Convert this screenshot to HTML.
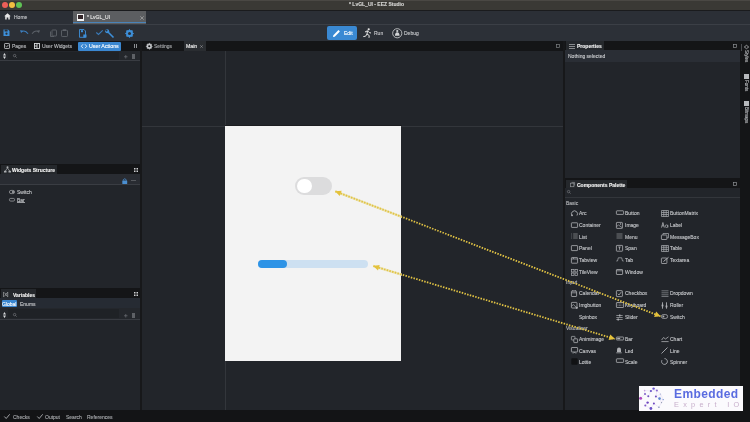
<!DOCTYPE html>
<html><head><meta charset="utf-8">
<style>
*{margin:0;padding:0;box-sizing:border-box}
html,body{width:750px;height:422px;overflow:hidden;background:#22252a;font-family:"Liberation Sans",sans-serif;color:#c6c8cb}
.a{position:absolute}
.t{position:absolute;white-space:nowrap;will-change:transform;-webkit-text-stroke:0.12px currentColor}
svg{position:absolute;overflow:visible}
</style></head><body>
<div class="a" style="left:0px;top:0px;width:750px;height:10px;background:#3a3935;"></div>
<div class="a" style="left:0px;top:0px;width:750px;height:1px;background:#4a4844;"></div>
<div class="a" style="left:0px;top:10px;width:750px;height:0.5px;background:#1a1b1d;"></div>
<div class="a" style="left:1.5px;top:2px;width:6px;height:6px;border-radius:50%;background:#ec5f58"></div>
<div class="a" style="left:8.5px;top:2px;width:6px;height:6px;border-radius:50%;background:#f3be41"></div>
<div class="a" style="left:15.5px;top:2px;width:6px;height:6px;border-radius:50%;background:#5fc355"></div>
<div class="t" style="left:348.5px;top:1.3px;font-size:5px;line-height:6.0px;color:#d6d6d4;font-weight:700;">* LvGL_UI - EEZ Studio</div>
<div class="a" style="left:0px;top:10.5px;width:750px;height:13.5px;background:#2b2f36;"></div>
<svg style="left:4px;top:13px;" width="7" height="7" viewBox="0 0 7 7"><path d="M3.5 0.3 L6.8 3.3 H5.8 V6.6 H4.3 V4.6 H2.7 V6.6 H1.2 V3.3 H0.2 Z" fill="#e6e6e6"/></svg>
<div class="t" style="left:14px;top:14.3px;font-size:5px;line-height:6.0px;color:#c4c6c9;font-weight:400;">Home</div>
<div class="a" style="left:73px;top:11px;width:73px;height:13px;background:#5c5e61;"></div>
<div class="a" style="left:73px;top:22.2px;width:73px;height:1.2px;background:#4a83b8;"></div>
<div class="a" style="left:77px;top:14px;width:7px;height:6.5px;background:#f3f3f3;"></div>
<div class="a" style="left:78.3px;top:15.2px;width:4.6px;height:4.2px;background:#33262a;"></div>
<div class="t" style="left:87px;top:14.3px;font-size:5px;line-height:6.0px;color:#e9e9e9;font-weight:400;">* LvGL_UI</div>
<svg style="left:140px;top:15.5px;" width="4" height="4" viewBox="0 0 4 4"><path d="M0.3 0.3 L3.7 3.7 M3.7 0.3 L0.3 3.7" stroke="#a9aaab" stroke-width="0.7"/></svg>
<div class="a" style="left:0px;top:24px;width:750px;height:16.5px;background:#2c3037;"></div>
<div class="a" style="left:0px;top:24px;width:750px;height:0.6px;background:#3b3f46;"></div>
<svg style="left:2.5px;top:29px;" width="7" height="7.5" viewBox="0 0 7 7.5"><path d="M0.5 0.5 H5 L6.5 2 V7 H0.5 Z" fill="#3d8fd9"/><rect x="1.6" y="0.5" width="3" height="2" fill="#2c3037"/><circle cx="3.5" cy="4.7" r="1.1" fill="#2c3037"/></svg>
<svg style="left:19.5px;top:30px;" width="9" height="5" viewBox="0 0 9 5"><path d="M1.5 1.8 Q5 -0.5 8 3.8" stroke="#3d7fbf" stroke-width="1.1" fill="none"/><path d="M0 0.3 L2.8 0.6 L1.2 3.2 Z" fill="#3d7fbf"/></svg>
<svg style="left:30.5px;top:30px;" width="9" height="5" viewBox="0 0 9 5"><path d="M7.5 1.8 Q4 -0.5 1 3.8" stroke="#5b6068" stroke-width="1.1" fill="none"/><path d="M9 0.3 L6.2 0.6 L7.8 3.2 Z" fill="#5b6068"/></svg>
<svg style="left:49.5px;top:29px;" width="7" height="8" viewBox="0 0 7 8"><rect x="2" y="1" width="4.5" height="6" rx="0.5" stroke="#5e6269" stroke-width="0.9" fill="none"/><path d="M0.5 2.5 V7.5 H4" stroke="#5e6269" stroke-width="0.9" fill="none"/></svg>
<svg style="left:60.5px;top:29px;" width="7" height="8" viewBox="0 0 7 8"><rect x="0.5" y="1.3" width="6" height="6.2" rx="0.7" stroke="#5e6269" stroke-width="0.9" fill="none"/><rect x="2" y="0.4" width="3" height="1.6" fill="#5e6269"/></svg>
<svg style="left:78.5px;top:28.5px;" width="8" height="9" viewBox="0 0 8 9"><path d="M0.5 0.5 H5 L6.5 2 V8.3 H0.5 Z" stroke="#3d8fd9" stroke-width="0.9" fill="none"/><rect x="4.3" y="5.5" width="3.2" height="3" fill="#3d8fd9"/><rect x="2" y="1.2" width="2" height="2" fill="#3d8fd9"/></svg>
<svg style="left:96px;top:30px;" width="7" height="5" viewBox="0 0 7 5"><path d="M0.3 2.5 L2.5 4.5 L6.7 0.3" stroke="#3a7ab8" stroke-width="1.1" fill="none"/></svg>
<svg style="left:105px;top:28.5px;" width="10" height="9" viewBox="0 0 10 9"><path d="M1.5 1.5 L8.5 8.5" stroke="#3d8fd9" stroke-width="1.6"/><circle cx="2.2" cy="2.2" r="2" fill="#3d8fd9"/><circle cx="1.6" cy="1.6" r="0.9" fill="#2c3037"/></svg>
<svg style="left:125px;top:28.5px;" width="9" height="9" viewBox="0 0 9 9"><path d="M8.50 4.50 L7.38 5.69 L7.33 7.33 L5.69 7.38 L4.50 8.50 L3.31 7.38 L1.67 7.33 L1.62 5.69 L0.50 4.50 L1.62 3.31 L1.67 1.67 L3.31 1.62 L4.50 0.50 L5.69 1.62 L7.33 1.67 L7.38 3.31Z" fill="#3d8fd9" stroke="#3d8fd9" stroke-width="0.8" stroke-linejoin="round"/><circle cx="4.5" cy="4.5" r="1.52" fill="#2c3037"/></svg>
<div class="a" style="left:326.5px;top:26px;width:30.5px;height:13.8px;background:#3a89d3;border-radius:2px"></div>
<svg style="left:331.5px;top:28.5px;" width="9" height="9" viewBox="0 0 9 9"><path d="M1 8 L1.3 6.3 L6.5 1.1 L7.9 2.5 L2.7 7.7 Z" fill="#fff"/></svg>
<div class="t" style="left:344.3px;top:30.2px;font-size:5px;line-height:6.0px;color:#ffffff;font-weight:400;">Edit</div>
<svg style="left:362.5px;top:27.5px;" width="9" height="10" viewBox="0 0 9 10"><circle cx="5.7" cy="1.3" r="1.1" fill="#e6e6e6"/><path d="M2 4 L4.5 2.8 L6.3 4.6 L8 5 M4.5 2.8 L4 6 L6.2 7.5 L6 9.8 M4 6 L2.6 8.2 L0.3 8.6" stroke="#e6e6e6" stroke-width="1" fill="none" stroke-linejoin="round"/></svg>
<div class="t" style="left:374px;top:30.2px;font-size:5px;line-height:6.0px;color:#c4c6c9;font-weight:400;">Run</div>
<svg style="left:391.5px;top:27.8px;" width="10.5" height="10.5" viewBox="0 0 10.5 10.5"><circle cx="5.25" cy="5.25" r="4.6" stroke="#d2d4d6" stroke-width="0.8" fill="none"/><circle cx="5.25" cy="3" r="1.1" fill="#d2d4d6"/><path d="M3 7.8 Q3 4.3 5.25 4.3 Q7.5 4.3 7.5 7.8 Z" fill="#d2d4d6"/></svg>
<div class="t" style="left:404px;top:30.2px;font-size:5px;line-height:6.0px;color:#c4c6c9;font-weight:400;">Debug</div>
<div class="a" style="left:0px;top:40.5px;width:140px;height:10.5px;background:#141517;"></div>
<svg style="left:4px;top:43px;" width="6" height="6" viewBox="0 0 6 6"><rect x="0.5" y="0.5" width="5" height="5" rx="0.6" stroke="#b5b7ba" stroke-width="0.9" fill="none"/><path d="M1.5 3 L2.6 4 L4.5 1.8" stroke="#b5b7ba" stroke-width="0.8" fill="none"/></svg>
<div class="t" style="left:12px;top:43.2px;font-size:5px;line-height:6.0px;color:#b9bbbe;font-weight:400;">Pages</div>
<svg style="left:34px;top:43px;" width="6" height="6" viewBox="0 0 6 6"><rect x="0.5" y="0.5" width="5" height="5" stroke="#dadcdf" stroke-width="0.9" fill="none"/><path d="M3 0.5 V5.5 M0.5 3 H3" stroke="#dadcdf" stroke-width="0.9"/></svg>
<div class="t" style="left:41.5px;top:43.2px;font-size:5px;line-height:6.0px;color:#b9bbbe;font-weight:400;">User Widgets</div>
<div class="a" style="left:78px;top:42.2px;width:43.2px;height:8.6px;background:#3a87d1;border-radius:1px"></div>
<svg style="left:81px;top:44.2px;" width="6" height="4.5" viewBox="0 0 6 4.5"><path d="M2 0.3 L0.3 2.25 L2 4.2 M4 0.3 L5.7 2.25 L4 4.2" stroke="#fff" stroke-width="0.8" fill="none"/></svg>
<div class="t" style="left:88.8px;top:43.1px;font-size:5.3px;line-height:6.359999999999999px;color:#ffffff;font-weight:400;">User Actions</div>
<div class="a" style="left:134px;top:44.2px;width:0.8px;height:4px;background:#8d9094;"></div>
<div class="a" style="left:136px;top:44.2px;width:0.8px;height:4px;background:#8d9094;"></div>
<div class="a" style="left:0px;top:51px;width:140px;height:9.5px;background:#24272c;"></div>
<div class="a" style="left:0px;top:60px;width:140px;height:0.8px;background:#393c42;"></div>
<div class="a" style="left:8px;top:51.5px;width:111px;height:8.5px;background:#1f2226;"></div>
<svg style="left:3px;top:53px;" width="3" height="6" viewBox="0 0 3 6"><path d="M1.5 0 L3 2.5 H0 Z M1.5 6 L3 3.5 H0 Z" fill="#d8dadc"/></svg>
<svg style="left:13px;top:53.5px;" width="4" height="4" viewBox="0 0 4 4"><circle cx="1.6" cy="1.6" r="1.2" stroke="#7f8287" stroke-width="0.6" fill="none"/><path d="M2.5 2.5 L3.7 3.7" stroke="#7f8287" stroke-width="0.6"/></svg>
<svg style="left:123.5px;top:54.8px;" width="3.5" height="3.5" viewBox="0 0 3.5 3.5"><path d="M1.75 0 V3.5 M0 1.75 H3.5" stroke="#6c7075" stroke-width="0.7"/></svg>
<div class="a" style="left:131.5px;top:54px;width:3px;height:4.5px;background:#5e6166;"></div>
<div class="a" style="left:140px;top:40.5px;width:2px;height:370px;background:#17181a;"></div>
<div class="a" style="left:0px;top:163.6px;width:140px;height:10px;background:#141517;"></div>
<div class="a" style="left:0.5px;top:164.8px;width:56.5px;height:8.8px;background:#25282c;"></div>
<svg style="left:4px;top:165.8px;" width="7" height="6.5" viewBox="0 0 7 6.5"><circle cx="3.5" cy="1.2" r="1" fill="#aeb0b3"/><path d="M3.5 2 L1.3 5 M3.5 2 L5.7 5" stroke="#aeb0b3" stroke-width="0.7"/><rect x="0" y="4.8" width="2.5" height="1.7" fill="#aeb0b3"/><rect x="4.5" y="4.8" width="2.5" height="1.7" fill="#aeb0b3"/></svg>
<div class="t" style="left:12.3px;top:167.2px;font-size:5px;line-height:6.0px;color:#f0f0f0;font-weight:700;">Widgets Structure</div>
<svg style="left:133.6px;top:167.8px;" width="4" height="4" viewBox="0 0 4 4"><rect x="0" y="0" width="1.5" height="1.5" fill="#cfd1d4"/><rect x="2.5" y="0" width="1.5" height="1.5" fill="#cfd1d4"/><rect x="0" y="2.5" width="1.5" height="1.5" fill="#cfd1d4"/><rect x="2.5" y="2.5" width="1.5" height="1.5" fill="#cfd1d4"/></svg>
<div class="a" style="left:0px;top:173.6px;width:140px;height:11px;background:#292c32;"></div>
<div class="a" style="left:0px;top:184.3px;width:140px;height:0.8px;background:#3a3d43;"></div>
<svg style="left:121.8px;top:177.5px;" width="5.5" height="6" viewBox="0 0 5.5 6"><path d="M1.2 2.5 V1.8 Q2.75 -0.3 4.3 1.8 V2.5" stroke="#4b8fd1" stroke-width="0.8" fill="none"/><rect x="0.3" y="2.5" width="4.9" height="3.5" rx="0.5" fill="#4b8fd1"/></svg>
<div class="a" style="left:131px;top:180.4px;width:5px;height:0.7px;background:#55585d;"></div>
<svg style="left:9px;top:189.5px;" width="6" height="4" viewBox="0 0 6 4"><rect x="0.4" y="0.4" width="5.2" height="3.2" rx="1.6" stroke="#a9abae" stroke-width="0.7" fill="none"/><circle cx="4" cy="2" r="1.1" fill="#a9abae"/></svg>
<div class="t" style="left:17px;top:188.5px;font-size:5px;line-height:6.0px;color:#c4c6c9;font-weight:400;">Switch</div>
<svg style="left:9px;top:197.8px;" width="6" height="3.5" viewBox="0 0 6 3.5"><rect x="0.4" y="0.4" width="5.2" height="2.7" rx="1.3" stroke="#a9abae" stroke-width="0.7" fill="none"/></svg>
<div class="t" style="left:17px;top:196.5px;font-size:5px;line-height:6.0px;color:#c4c6c9;font-weight:400;">Bar</div>
<div class="a" style="left:17px;top:201.8px;width:7.8px;height:0.5px;background:#9a9ca0;"></div>
<div class="a" style="left:0px;top:288px;width:140px;height:9.6px;background:#141517;"></div>
<div class="a" style="left:1px;top:288.5px;width:35px;height:9.1px;background:#25282c;"></div>
<div class="t" style="left:3px;top:291.3px;font-size:5px;line-height:6.0px;color:#b2b4b7;font-weight:400;">[x]</div>
<div class="t" style="left:12.5px;top:291.5px;font-size:5px;line-height:6.0px;color:#f0f0f0;font-weight:700;">Variables</div>
<svg style="left:133.7px;top:291.5px;" width="4" height="4" viewBox="0 0 4 4"><rect x="0" y="0" width="1.5" height="1.5" fill="#cfd1d4"/><rect x="2.5" y="0" width="1.5" height="1.5" fill="#cfd1d4"/><rect x="0" y="2.5" width="1.5" height="1.5" fill="#cfd1d4"/><rect x="2.5" y="2.5" width="1.5" height="1.5" fill="#cfd1d4"/></svg>
<div class="a" style="left:0px;top:297.6px;width:140px;height:10.6px;background:#262b33;"></div>
<div class="a" style="left:1.5px;top:299.8px;width:15.5px;height:7.6px;background:#3a87d1;border-radius:1px"></div>
<div class="t" style="left:2px;top:301.2px;font-size:5px;line-height:6.0px;color:#ffffff;font-weight:400;">Global</div>
<div class="t" style="left:19.5px;top:301.2px;font-size:5px;line-height:6.0px;color:#c4c6c9;font-weight:400;">Enums</div>
<div class="a" style="left:0px;top:308.2px;width:140px;height:10.8px;background:#24272c;"></div>
<div class="a" style="left:0px;top:318.5px;width:140px;height:0.8px;background:#393c42;"></div>
<div class="a" style="left:8px;top:309px;width:111px;height:9.3px;background:#1f2226;"></div>
<svg style="left:3px;top:312px;" width="3" height="6" viewBox="0 0 3 6"><path d="M1.5 0 L3 2.5 H0 Z M1.5 6 L3 3.5 H0 Z" fill="#d8dadc"/></svg>
<svg style="left:13px;top:313px;" width="4" height="4" viewBox="0 0 4 4"><circle cx="1.6" cy="1.6" r="1.2" stroke="#7f8287" stroke-width="0.6" fill="none"/><path d="M2.5 2.5 L3.7 3.7" stroke="#7f8287" stroke-width="0.6"/></svg>
<svg style="left:123.5px;top:313.5px;" width="3.5" height="3.5" viewBox="0 0 3.5 3.5"><path d="M1.75 0 V3.5 M0 1.75 H3.5" stroke="#6c7075" stroke-width="0.7"/></svg>
<div class="a" style="left:131.5px;top:313px;width:3px;height:4.5px;background:#5e6166;"></div>
<div class="a" style="left:142px;top:40.5px;width:421px;height:10.5px;background:#141517;"></div>
<svg style="left:145.6px;top:42.8px;" width="6.5" height="6.5" viewBox="0 0 6.5 6.5"><path d="M6.15 3.25 L5.34 4.12 L5.30 5.30 L4.12 5.34 L3.25 6.15 L2.38 5.34 L1.20 5.30 L1.16 4.12 L0.35 3.25 L1.16 2.38 L1.20 1.20 L2.38 1.16 L3.25 0.35 L4.12 1.16 L5.30 1.20 L5.34 2.38Z" fill="#c9cbce" stroke="#c9cbce" stroke-width="0.8" stroke-linejoin="round"/><circle cx="3.25" cy="3.25" r="1.10" fill="#141517"/></svg>
<div class="t" style="left:154px;top:43.2px;font-size:5px;line-height:6.0px;color:#a6a8ab;font-weight:400;">Settings</div>
<div class="a" style="left:184px;top:41.2px;width:22px;height:9.8px;background:#2a2d31;"></div>
<div class="t" style="left:186.3px;top:43.2px;font-size:5.2px;line-height:6.24px;color:#f2f2f2;font-weight:400;">Main</div>
<svg style="left:199.5px;top:45px;" width="3" height="3" viewBox="0 0 3 3"><path d="M0.3 0.3 L2.7 2.7 M2.7 0.3 L0.3 2.7" stroke="#9a9c9f" stroke-width="0.6"/></svg>
<div class="a" style="left:225px;top:51px;width:1px;height:359px;background:#33363b;"></div>
<svg style="left:555.8px;top:44.3px;" width="4" height="4" viewBox="0 0 4 4"><rect x="0.4" y="0.4" width="3.2" height="3.2" stroke="#7d8084" stroke-width="0.7" fill="none"/></svg>
<div class="a" style="left:142px;top:125.8px;width:421px;height:1px;background:#33363b;"></div>
<div class="a" style="left:225px;top:124.6px;width:176.5px;height:1.2px;background:#1c1d20;"></div>
<div class="a" style="left:224.8px;top:125.8px;width:176.7px;height:235px;background:#f3f3f3;"></div>
<div class="a" style="left:295.4px;top:176.8px;width:36.4px;height:18px;background:#dcdcdd;border-radius:9px"></div>
<div class="a" style="left:297.3px;top:178.5px;width:14.6px;height:14.6px;border-radius:50%;background:#fff"></div>
<div class="a" style="left:258px;top:259.8px;width:110.3px;height:7.8px;background:#cde0f1;border-radius:3.9px"></div>
<div class="a" style="left:258px;top:259.8px;width:28.5px;height:7.8px;background:#2d93e6;border-radius:3.9px"></div>
<div class="a" style="left:563px;top:40.5px;width:2px;height:370px;background:#17181a;"></div>
<div class="a" style="left:565px;top:40.5px;width:175px;height:9.5px;background:#141517;"></div>
<div class="a" style="left:565.5px;top:41.2px;width:38px;height:8.8px;background:#25282c;"></div>
<svg style="left:569px;top:43.5px;" width="6" height="5" viewBox="0 0 6 5"><path d="M0 0.5 H6 M0 2.5 H6 M0 4.5 H6" stroke="#b4b6b9" stroke-width="0.7"/></svg>
<div class="t" style="left:576.8px;top:43.2px;font-size:5px;line-height:6.0px;color:#f0f0f0;font-weight:700;">Properties</div>
<svg style="left:733px;top:44px;" width="4" height="4" viewBox="0 0 4 4"><rect x="0.4" y="0.4" width="3.2" height="3.2" stroke="#8d9094" stroke-width="0.7" fill="none"/></svg>
<div class="a" style="left:565px;top:50px;width:175px;height:12px;background:#2a2e35;"></div>
<div class="t" style="left:568px;top:53.4px;font-size:5px;line-height:6.0px;color:#c9cbce;font-weight:400;">Nothing selected</div>
<div class="a" style="left:740px;top:40.5px;width:10px;height:370px;background:#141517;"></div>
<div class="a" style="left:740.5px;top:44px;width:1.5px;height:7px;background:#4a4c50;"></div>
<div class="a" style="left:565px;top:177.6px;width:175px;height:10px;background:#141517;"></div>
<div class="a" style="left:566px;top:180px;width:61px;height:7.6px;background:#25282c;"></div>
<svg style="left:569.5px;top:181.5px;" width="5" height="5" viewBox="0 0 5 5"><rect x="0.4" y="1.2" width="3.5" height="3.5" stroke="#8f9296" stroke-width="0.7" fill="none"/><path d="M1.5 0.4 H4.6 V3.5" stroke="#8f9296" stroke-width="0.7" fill="none"/></svg>
<div class="t" style="left:577px;top:181.6px;font-size:5px;line-height:6.0px;color:#f0f0f0;font-weight:700;">Components Palette</div>
<svg style="left:733px;top:182px;" width="4" height="4" viewBox="0 0 4 4"><rect x="0.4" y="0.4" width="3.2" height="3.2" stroke="#8d9094" stroke-width="0.7" fill="none"/></svg>
<div class="a" style="left:565px;top:187.6px;width:175px;height:9.6px;background:#22252a;"></div>
<div class="a" style="left:565px;top:197px;width:175px;height:0.8px;background:#33363b;"></div>
<svg style="left:567px;top:190.3px;" width="4" height="4" viewBox="0 0 4 4"><circle cx="1.6" cy="1.6" r="1.2" stroke="#7f8287" stroke-width="0.6" fill="none"/><path d="M2.5 2.5 L3.7 3.7" stroke="#7f8287" stroke-width="0.6"/></svg>
<div class="t" style="left:566px;top:199.5px;font-size:5px;line-height:6.0px;color:#b6b8bb;font-weight:400;">Basic</div>
<div class="a" style="left:0px;top:410.4px;width:750px;height:11.6px;background:#131416;"></div>
<svg style="left:4px;top:414px;" width="6" height="5" viewBox="0 0 6 5"><path d="M0.3 2.5 L2.2 4.5 L5.7 0.3" stroke="#c0c2c5" stroke-width="0.8" fill="none"/></svg>
<div class="t" style="left:13px;top:413.7px;font-size:5px;line-height:6.0px;color:#a6a8ab;font-weight:400;">Checks</div>
<svg style="left:37px;top:414px;" width="6" height="5" viewBox="0 0 6 5"><path d="M0.3 2.5 L2.2 4.5 L5.7 0.3" stroke="#c0c2c5" stroke-width="0.8" fill="none"/></svg>
<div class="t" style="left:45px;top:413.7px;font-size:5px;line-height:6.0px;color:#a6a8ab;font-weight:400;">Output</div>
<div class="t" style="left:66px;top:413.7px;font-size:5px;line-height:6.0px;color:#a6a8ab;font-weight:400;">Search</div>
<div class="t" style="left:87px;top:413.7px;font-size:5px;line-height:6.0px;color:#a6a8ab;font-weight:400;">References</div>
<svg style="left:570.5px;top:209.89999999999998px;" width="7" height="6" viewBox="0 0 7 6"><path d="M1 5.5 A3 3 0 1 1 6 5.5" stroke="#aeb0b4" stroke-width="0.9" fill="none"/><circle cx="1" cy="5.3" r="0.9" fill="#aeb0b4"/></svg>
<div class="t" style="left:579px;top:210.2px;font-size:5px;line-height:6.0px;color:#c3c5c8;font-weight:400;">Arc</div>
<svg style="left:616px;top:209.89999999999998px;" width="8" height="5" viewBox="0 0 8 5"><rect x="0.4" y="0.8" width="7.2" height="3.6" rx="0.6" stroke="#aeb0b4" stroke-width="0.8" fill="none"/></svg>
<div class="t" style="left:625px;top:210.2px;font-size:5px;line-height:6.0px;color:#c3c5c8;font-weight:400;">Button</div>
<svg style="left:661px;top:209.89999999999998px;" width="8" height="7" viewBox="0 0 8 7"><path d="M0.5 0.5 H7.5 V6.5 H0.5 Z M0.5 2.5 H7.5 M0.5 4.5 H7.5 M2.8 0.5 V6.5 M5.2 0.5 V6.5" stroke="#aeb0b4" stroke-width="0.7" fill="none"/></svg>
<div class="t" style="left:670px;top:210.2px;font-size:5px;line-height:6.0px;color:#c3c5c8;font-weight:400;">ButtonMatrix</div>
<svg style="left:570.5px;top:221.7px;" width="7" height="6" viewBox="0 0 7 6"><rect x="0.4" y="0.8" width="6.2" height="4.6" rx="0.5" stroke="#aeb0b4" stroke-width="0.8" fill="none"/></svg>
<div class="t" style="left:579px;top:222px;font-size:5px;line-height:6.0px;color:#c3c5c8;font-weight:400;">Container</div>
<svg style="left:616px;top:221.7px;" width="7" height="7" viewBox="0 0 7 7"><rect x="0.4" y="0.4" width="6" height="6" rx="0.6" stroke="#aeb0b4" stroke-width="0.8" fill="none"/><path d="M0.6 4.5 L2.5 3 L6.3 5.8" stroke="#aeb0b4" stroke-width="0.7" fill="none"/><circle cx="4.5" cy="2" r="0.7" fill="#aeb0b4"/></svg>
<div class="t" style="left:625px;top:222px;font-size:5px;line-height:6.0px;color:#c3c5c8;font-weight:400;">Image</div>
<svg style="left:661px;top:221.7px;" width="8" height="6" viewBox="0 0 8 6"><path d="M0.5 5.6 L1.9 0.5 L3.3 5.6 M1 3.8 H2.8" stroke="#aeb0b4" stroke-width="0.8" fill="none"/><circle cx="5.5" cy="4.2" r="1.3" stroke="#aeb0b4" stroke-width="0.7" fill="none"/><path d="M6.8 2.8 V5.6" stroke="#aeb0b4" stroke-width="0.7"/></svg>
<div class="t" style="left:670px;top:222px;font-size:5px;line-height:6.0px;color:#c3c5c8;font-weight:400;">Label</div>
<svg style="left:570.5px;top:233.29999999999998px;" width="7" height="6" viewBox="0 0 7 6"><path d="M0.3 1 H1.1 M2.2 1 H6.7 M0.3 3 H1.1 M2.2 3 H6.7 M0.3 5 H1.1 M2.2 5 H6.7" stroke="#aeb0b4" stroke-width="0.6"/></svg>
<div class="t" style="left:579px;top:233.6px;font-size:5px;line-height:6.0px;color:#c3c5c8;font-weight:400;">List</div>
<svg style="left:616px;top:233.29999999999998px;" width="7" height="6" viewBox="0 0 7 6"><path d="M0.5 1 H6.5 M0.5 3 H6.5 M0.5 5 H6.5" stroke="#aeb0b4" stroke-width="0.6"/></svg>
<div class="t" style="left:625px;top:233.6px;font-size:5px;line-height:6.0px;color:#c3c5c8;font-weight:400;">Menu</div>
<svg style="left:661px;top:233.29999999999998px;" width="8" height="7" viewBox="0 0 8 7"><rect x="0.4" y="2" width="5.5" height="4.5" rx="0.5" stroke="#aeb0b4" stroke-width="0.8" fill="none"/><path d="M2 2 V0.5 H7.5 V4.8 H5.9" stroke="#aeb0b4" stroke-width="0.7" fill="none"/></svg>
<div class="t" style="left:670px;top:233.6px;font-size:5px;line-height:6.0px;color:#c3c5c8;font-weight:400;">MessageBox</div>
<svg style="left:570.5px;top:245.0px;" width="7" height="6" viewBox="0 0 7 6"><rect x="0.4" y="0.6" width="6.2" height="5" rx="0.5" stroke="#aeb0b4" stroke-width="0.8" fill="none"/></svg>
<div class="t" style="left:579px;top:245.3px;font-size:5px;line-height:6.0px;color:#c3c5c8;font-weight:400;">Panel</div>
<svg style="left:616px;top:245.0px;" width="7" height="7" viewBox="0 0 7 7"><rect x="0.4" y="0.4" width="6.2" height="5.8" rx="0.5" stroke="#aeb0b4" stroke-width="0.8" fill="none"/><path d="M2.3 2 H4.7 M3.5 2 V4.8" stroke="#aeb0b4" stroke-width="0.8"/></svg>
<div class="t" style="left:625px;top:245.3px;font-size:5px;line-height:6.0px;color:#c3c5c8;font-weight:400;">Span</div>
<svg style="left:661px;top:245.0px;" width="8" height="7" viewBox="0 0 8 7"><path d="M0.5 0.5 H7.5 V6.5 H0.5 Z M0.5 2.3 H7.5 M0.5 4.4 H7.5 M2.8 0.5 V6.5 M5.2 0.5 V6.5" stroke="#aeb0b4" stroke-width="0.7" fill="none"/></svg>
<div class="t" style="left:670px;top:245.3px;font-size:5px;line-height:6.0px;color:#c3c5c8;font-weight:400;">Table</div>
<svg style="left:570.5px;top:256.7px;" width="7" height="7" viewBox="0 0 7 7"><rect x="0.4" y="0.6" width="6.2" height="5.6" rx="0.5" stroke="#aeb0b4" stroke-width="0.8" fill="none"/><path d="M0.4 2 H6.6 M2.5 0.6 V2" stroke="#aeb0b4" stroke-width="0.7"/></svg>
<div class="t" style="left:579px;top:257px;font-size:5px;line-height:6.0px;color:#c3c5c8;font-weight:400;">Tabview</div>
<svg style="left:616px;top:256.7px;" width="8" height="5" viewBox="0 0 8 5"><path d="M0.3 4 H1.5 L2.3 0.8 H5.7 L6.5 4 H7.7" stroke="#aeb0b4" stroke-width="0.7" fill="none"/></svg>
<div class="t" style="left:625px;top:257px;font-size:5px;line-height:6.0px;color:#c3c5c8;font-weight:400;">Tab</div>
<svg style="left:661px;top:256.7px;" width="8" height="7" viewBox="0 0 8 7"><rect x="0.4" y="1" width="5.5" height="5.5" rx="0.6" stroke="#aeb0b4" stroke-width="0.8" fill="none"/><path d="M2.5 4.5 L7.5 0.3" stroke="#aeb0b4" stroke-width="1"/></svg>
<div class="t" style="left:670px;top:257px;font-size:5px;line-height:6.0px;color:#c3c5c8;font-weight:400;">Textarea</div>
<svg style="left:570.5px;top:268.5px;" width="7" height="7" viewBox="0 0 7 7"><rect x="0.4" y="0.4" width="2.6" height="2.6" stroke="#aeb0b4" stroke-width="0.7" fill="none"/><rect x="4" y="0.4" width="2.6" height="2.6" stroke="#aeb0b4" stroke-width="0.7" fill="none"/><rect x="0.4" y="4" width="2.6" height="2.6" stroke="#aeb0b4" stroke-width="0.7" fill="none"/><rect x="4" y="4" width="2.6" height="2.6" stroke="#aeb0b4" stroke-width="0.7" fill="none"/></svg>
<div class="t" style="left:579px;top:268.8px;font-size:5px;line-height:6.0px;color:#c3c5c8;font-weight:400;">TileView</div>
<svg style="left:616px;top:268.5px;" width="7" height="6" viewBox="0 0 7 6"><rect x="0.4" y="0.5" width="6.2" height="5" rx="0.5" stroke="#aeb0b4" stroke-width="0.8" fill="none"/><path d="M0.4 1.8 H6.6" stroke="#aeb0b4" stroke-width="0.7"/></svg>
<div class="t" style="left:625px;top:268.8px;font-size:5px;line-height:6.0px;color:#c3c5c8;font-weight:400;">Window</div>
<div class="t" style="left:566px;top:278.6px;font-size:5px;line-height:6.0px;color:#b6b8bb;font-weight:400;">Input</div>
<svg style="left:570.5px;top:290.09999999999997px;" width="6" height="7" viewBox="0 0 6 7"><rect x="0.4" y="1" width="5.2" height="5.5" rx="0.6" stroke="#aeb0b4" stroke-width="0.8" fill="none"/><path d="M0.4 2.8 H5.6 M1.8 0 V1.5 M4.2 0 V1.5" stroke="#aeb0b4" stroke-width="0.7"/></svg>
<div class="t" style="left:579px;top:290.4px;font-size:5px;line-height:6.0px;color:#c3c5c8;font-weight:400;">Calendar</div>
<svg style="left:616px;top:290.09999999999997px;" width="7" height="7" viewBox="0 0 7 7"><rect x="0.4" y="0.6" width="6" height="6" rx="0.6" stroke="#aeb0b4" stroke-width="0.8" fill="none"/><path d="M1.8 3.8 L3 5 L5.6 1.6" stroke="#aeb0b4" stroke-width="0.8" fill="none"/></svg>
<div class="t" style="left:625px;top:290.4px;font-size:5px;line-height:6.0px;color:#c3c5c8;font-weight:400;">Checkbox</div>
<svg style="left:661px;top:290.09999999999997px;" width="8" height="7" viewBox="0 0 8 7"><path d="M0.5 0.8 H7.5 M0.5 2.8 H7.5 M0.5 4.8 H7.5 M0.5 6.5 H7.5" stroke="#777a7f" stroke-width="0.9"/></svg>
<div class="t" style="left:670px;top:290.4px;font-size:5px;line-height:6.0px;color:#c3c5c8;font-weight:400;">Dropdown</div>
<svg style="left:570.5px;top:301.7px;" width="7" height="7" viewBox="0 0 7 7"><rect x="0.4" y="0.4" width="5.6" height="5.6" rx="0.6" stroke="#aeb0b4" stroke-width="0.8" fill="none"/><path d="M0.6 4 L2.4 2.6 L5.5 5.5" stroke="#aeb0b4" stroke-width="0.7" fill="none"/><circle cx="5.8" cy="5.8" r="1.1" fill="#aeb0b4"/></svg>
<div class="t" style="left:579px;top:302px;font-size:5px;line-height:6.0px;color:#c3c5c8;font-weight:400;">Imgbutton</div>
<svg style="left:616px;top:301.7px;" width="8" height="6" viewBox="0 0 8 6"><rect x="0.4" y="0.5" width="7.2" height="5" rx="0.5" stroke="#aeb0b4" stroke-width="0.8" fill="none"/><path d="M1.6 2 H6.4 M1.6 3.6 H6.4" stroke="#aeb0b4" stroke-width="0.6" stroke-dasharray="0.8 0.6"/></svg>
<div class="t" style="left:625px;top:302px;font-size:5px;line-height:6.0px;color:#c3c5c8;font-weight:400;">Keyboard</div>
<svg style="left:661px;top:301.7px;" width="7" height="7" viewBox="0 0 7 7"><path d="M1.5 0.3 V6.7 M5.5 0.3 V6.7" stroke="#aeb0b4" stroke-width="0.9"/><rect x="0.6" y="2.6" width="1.8" height="1.8" fill="#aeb0b4"/><rect x="4.6" y="3.5" width="1.8" height="1.8" fill="#aeb0b4"/></svg>
<div class="t" style="left:670px;top:302px;font-size:5px;line-height:6.0px;color:#c3c5c8;font-weight:400;">Roller</div>
<div class="t" style="left:579px;top:314px;font-size:5px;line-height:6.0px;color:#c3c5c8;font-weight:400;">Spinbox</div>
<svg style="left:616px;top:313.7px;" width="7" height="7" viewBox="0 0 7 7"><path d="M0.3 1.5 H6.7 M0.3 3.5 H6.7 M0.3 5.5 H6.7" stroke="#aeb0b4" stroke-width="0.7"/><rect x="3" y="0.5" width="1.4" height="2" fill="#aeb0b4"/><rect x="1.5" y="4.5" width="1.4" height="2" fill="#aeb0b4"/></svg>
<div class="t" style="left:625px;top:314px;font-size:5px;line-height:6.0px;color:#c3c5c8;font-weight:400;">Slider</div>
<svg style="left:661px;top:313.7px;" width="7" height="5" viewBox="0 0 7 5"><rect x="0.4" y="0.6" width="6.2" height="3.8" rx="1.9" stroke="#aeb0b4" stroke-width="0.8" fill="none"/><circle cx="2.4" cy="2.5" r="1" fill="#aeb0b4"/></svg>
<div class="t" style="left:670px;top:314px;font-size:5px;line-height:6.0px;color:#c3c5c8;font-weight:400;">Switch</div>
<div class="t" style="left:566px;top:325.3px;font-size:5px;line-height:6.0px;color:#b6b8bb;font-weight:400;">Visualiser</div>
<svg style="left:570.5px;top:335.5px;" width="7" height="7" viewBox="0 0 7 7"><rect x="0.4" y="0.4" width="3.6" height="3.6" rx="0.4" stroke="#aeb0b4" stroke-width="0.7" fill="none"/><rect x="2.8" y="2.8" width="3.8" height="3.8" rx="0.4" stroke="#aeb0b4" stroke-width="0.8" fill="#22252a"/></svg>
<div class="t" style="left:579px;top:335.8px;font-size:5px;line-height:6.0px;color:#c3c5c8;font-weight:400;">Animimage</div>
<svg style="left:616px;top:335.5px;" width="8" height="5" viewBox="0 0 8 5"><rect x="0.4" y="1" width="7.2" height="3" rx="0.5" stroke="#aeb0b4" stroke-width="0.8" fill="none"/><rect x="1.2" y="1.8" width="3" height="1.4" fill="#aeb0b4"/></svg>
<div class="t" style="left:625px;top:335.8px;font-size:5px;line-height:6.0px;color:#c3c5c8;font-weight:400;">Bar</div>
<svg style="left:661px;top:335.5px;" width="8" height="6" viewBox="0 0 8 6"><path d="M0.4 5.6 H7.6" stroke="#aeb0b4" stroke-width="0.8"/><path d="M0.6 4 L2.5 1.5 L4.5 3 L7.5 0.8" stroke="#aeb0b4" stroke-width="0.8" fill="none"/></svg>
<div class="t" style="left:670px;top:335.8px;font-size:5px;line-height:6.0px;color:#c3c5c8;font-weight:400;">Chart</div>
<svg style="left:570.5px;top:347.2px;" width="7" height="7" viewBox="0 0 7 7"><rect x="0.4" y="0.5" width="6.2" height="4.5" rx="0.5" stroke="#aeb0b4" stroke-width="0.8" fill="none"/><path d="M2 6.6 L3.5 5 L5 6.6" stroke="#aeb0b4" stroke-width="0.7" fill="none"/></svg>
<div class="t" style="left:579px;top:347.5px;font-size:5px;line-height:6.0px;color:#c3c5c8;font-weight:400;">Canvas</div>
<svg style="left:616px;top:347.2px;" width="6" height="7" viewBox="0 0 6 7"><path d="M1 5 V2.6 A2 2 0 0 1 5 2.6 V5 Z" fill="#aeb0b4"/><path d="M0.3 5.8 H5.7" stroke="#aeb0b4" stroke-width="0.8"/></svg>
<div class="t" style="left:625px;top:347.5px;font-size:5px;line-height:6.0px;color:#c3c5c8;font-weight:400;">Led</div>
<svg style="left:661px;top:347.2px;" width="7" height="7" viewBox="0 0 7 7"><path d="M0.5 6.5 L6.5 0.5" stroke="#aeb0b4" stroke-width="0.9"/></svg>
<div class="t" style="left:670px;top:347.5px;font-size:5px;line-height:6.0px;color:#c3c5c8;font-weight:400;">Line</div>
<svg style="left:570.5px;top:358.4px;" width="7" height="7" viewBox="0 0 7 7"><rect x="0.3" y="0.3" width="6.4" height="6.4" rx="0.8" fill="#111214"/></svg>
<div class="t" style="left:579px;top:358.7px;font-size:5px;line-height:6.0px;color:#c3c5c8;font-weight:400;">Lottie</div>
<svg style="left:616px;top:358.4px;" width="8" height="5" viewBox="0 0 8 5"><rect x="0.4" y="0.8" width="7.2" height="3.6" rx="0.5" stroke="#aeb0b4" stroke-width="0.8" fill="none"/></svg>
<div class="t" style="left:625px;top:358.7px;font-size:5px;line-height:6.0px;color:#c3c5c8;font-weight:400;">Scale</div>
<svg style="left:661px;top:358.4px;" width="7" height="7" viewBox="0 0 7 7"><path d="M3.5 0.6 A2.9 2.9 0 1 1 0.9 2.2" stroke="#aeb0b4" stroke-width="0.9" fill="none"/></svg>
<div class="t" style="left:670px;top:358.7px;font-size:5px;line-height:6.0px;color:#c3c5c8;font-weight:400;">Spinner</div>
<svg style="left:743.5px;top:45px;" width="5" height="4" viewBox="0 0 5 4"><path d="M0.3 2 L2.5 0.3 L4.7 2 L2.5 3.7 Z" stroke="#c8cacd" stroke-width="0.7" fill="none"/></svg>
<div class="t" style="left:748.5px;top:50px;font-size:4.5px;line-height:5px;color:#b9bbbe;transform-origin:0 0;transform:rotate(90deg)">Styles</div>
<div class="a" style="left:743.5px;top:74px;width:5px;height:5px;background:#b7b9bc;"></div>
<div class="t" style="left:748.5px;top:80px;font-size:4.5px;line-height:5px;color:#b9bbbe;transform-origin:0 0;transform:rotate(90deg)">Fonts</div>
<div class="a" style="left:743.5px;top:101px;width:5px;height:5px;background:#b7b9bc;"></div>
<div class="t" style="left:748.5px;top:107px;font-size:4.5px;line-height:5px;color:#b9bbbe;transform-origin:0 0;transform:rotate(90deg)">Bitmaps</div>
<svg style="left:0;top:0" width="750" height="422" viewBox="0 0 750 422"><defs><clipPath id="cv335"><rect x="224.8" y="125.8" width="177" height="235"/></clipPath></defs><line x1="335.3" y1="191.3" x2="660.5" y2="316.3" stroke="#ece4b4" stroke-width="2.4" clip-path="url(#cv335)"/><line x1="335.3" y1="191.3" x2="660.5" y2="316.3" stroke="#e0c244" stroke-width="1.8" stroke-dasharray="1.5 1.3"/><polygon points="335.3,191.3 341.7,190.7 339.6,196.1" fill="#e4c23c"/><polygon points="660.5,316.3 654.1,316.9 656.2,311.5" fill="#e4c23c"/></svg>
<svg style="left:0;top:0" width="750" height="422" viewBox="0 0 750 422"><defs><clipPath id="cv373"><rect x="224.8" y="125.8" width="177" height="235"/></clipPath></defs><line x1="373.3" y1="266" x2="615" y2="339" stroke="#ece4b4" stroke-width="2.4" clip-path="url(#cv373)"/><line x1="373.3" y1="266" x2="615" y2="339" stroke="#e0c244" stroke-width="1.8" stroke-dasharray="1.5 1.3"/><polygon points="373.3,266.0 379.7,264.9 378.0,270.4" fill="#e4c23c"/><polygon points="615.0,339.0 608.6,340.1 610.3,334.6" fill="#e4c23c"/></svg>
<div class="a" style="left:638.8px;top:386.4px;width:104.5px;height:24.4px;background:#fbfafd;"></div>
<div class="t" style="left:673.8px;top:387.4px;font-size:12px;line-height:14.399999999999999px;color:#5a6ce0;font-weight:700;letter-spacing:0.4px;-webkit-text-stroke:0">Embedded</div>
<div class="t" style="left:674px;top:401.2px;font-size:7.3px;line-height:8.76px;color:#c8b0cc;font-weight:400;letter-spacing:4.3px;-webkit-text-stroke:0">Expert IO</div>
<svg style="left:639px;top:386px;" width="26" height="24" viewBox="0 0 26 24"><line x1="14.6" y1="2.6" x2="11.9" y2="5.0" stroke="#d8d0f0" stroke-width="0.4"/><line x1="14.6" y1="2.6" x2="17.9" y2="4.6" stroke="#d8d0f0" stroke-width="0.4"/><line x1="5.6" y1="4.6" x2="11.9" y2="5.0" stroke="#d8d0f0" stroke-width="0.4"/><line x1="5.6" y1="4.6" x2="6.0" y2="8.0" stroke="#d8d0f0" stroke-width="0.4"/><line x1="11.9" y1="5.0" x2="17.9" y2="4.6" stroke="#d8d0f0" stroke-width="0.4"/><line x1="11.9" y1="5.0" x2="9.3" y2="10.3" stroke="#d8d0f0" stroke-width="0.4"/><line x1="17.9" y1="4.6" x2="21.5" y2="8.0" stroke="#d8d0f0" stroke-width="0.4"/><line x1="17.9" y1="4.6" x2="16.9" y2="10.6" stroke="#d8d0f0" stroke-width="0.4"/><line x1="6.0" y1="8.0" x2="9.3" y2="10.3" stroke="#d8d0f0" stroke-width="0.4"/><line x1="6.0" y1="8.0" x2="1.6" y2="12.3" stroke="#d8d0f0" stroke-width="0.4"/><line x1="21.5" y1="8.0" x2="16.9" y2="10.6" stroke="#d8d0f0" stroke-width="0.4"/><line x1="21.5" y1="8.0" x2="20.5" y2="12.6" stroke="#d8d0f0" stroke-width="0.4"/><line x1="21.5" y1="8.0" x2="24.2" y2="13.6" stroke="#d8d0f0" stroke-width="0.4"/><line x1="16.9" y1="10.6" x2="20.5" y2="12.6" stroke="#d8d0f0" stroke-width="0.4"/><line x1="20.5" y1="12.6" x2="24.2" y2="13.6" stroke="#d8d0f0" stroke-width="0.4"/><line x1="20.5" y1="12.6" x2="22.5" y2="16.6" stroke="#d8d0f0" stroke-width="0.4"/><line x1="24.2" y1="13.6" x2="22.5" y2="16.6" stroke="#d8d0f0" stroke-width="0.4"/><line x1="8.6" y1="16.6" x2="6.3" y2="19.6" stroke="#d8d0f0" stroke-width="0.4"/><line x1="14.9" y1="17.6" x2="19.9" y2="21.2" stroke="#d8d0f0" stroke-width="0.4"/><line x1="14.9" y1="17.6" x2="11.9" y2="22.5" stroke="#d8d0f0" stroke-width="0.4"/><line x1="22.5" y1="16.6" x2="19.9" y2="21.2" stroke="#d8d0f0" stroke-width="0.4"/><line x1="6.3" y1="19.6" x2="11.9" y2="22.5" stroke="#d8d0f0" stroke-width="0.4"/><circle cx="14.6" cy="2.6" r="1.2" fill="#6c58d0"/><circle cx="5.6" cy="4.6" r="0.8" fill="#c9a0e0"/><circle cx="11.9" cy="5.0" r="1.1" fill="#6a55c8"/><circle cx="17.9" cy="4.6" r="1.0" fill="#8a6ad0"/><circle cx="6.0" cy="8.0" r="1.0" fill="#8060c8"/><circle cx="21.5" cy="8.0" r="0.6" fill="#a0a8d0"/><circle cx="9.3" cy="10.3" r="1.0" fill="#7050c0"/><circle cx="16.9" cy="10.6" r="1.0" fill="#7050c0"/><circle cx="1.6" cy="12.3" r="1.5" fill="#b048c0"/><circle cx="20.5" cy="12.6" r="1.3" fill="#5a88d0"/><circle cx="24.2" cy="13.6" r="0.7" fill="#7090d0"/><circle cx="8.6" cy="16.6" r="1.2" fill="#7048c0"/><circle cx="14.9" cy="17.6" r="1.0" fill="#7048c0"/><circle cx="22.5" cy="16.6" r="0.7" fill="#9098b0"/><circle cx="6.3" cy="19.6" r="1.0" fill="#8058c8"/><circle cx="19.9" cy="21.2" r="0.8" fill="#8090b8"/><circle cx="11.9" cy="22.5" r="1.4" fill="#6a50c8"/></svg>
</body></html>
